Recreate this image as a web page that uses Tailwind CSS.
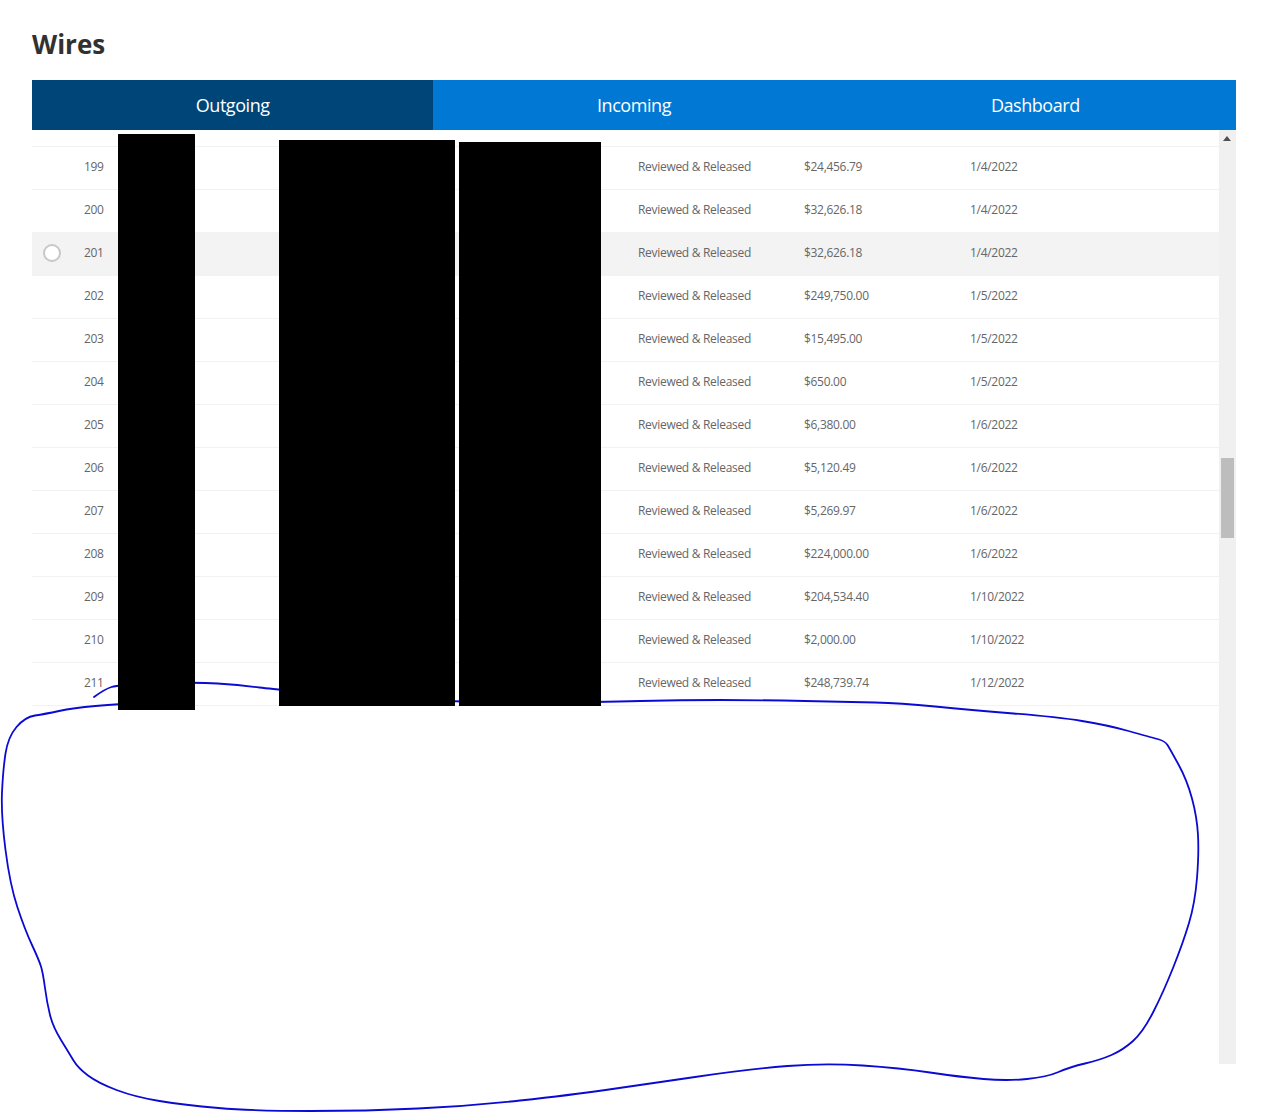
<!DOCTYPE html>
<html lang="en">
<head>
    <meta charset="UTF-8">
    <title>Wires</title>
    <script src="https://cdn.jsdelivr.net/npm/@tailwindcss/browser@4"></script>
</head>
<body class="bg-white font-['Open_Sans',sans-serif] overflow-hidden">
    <div class="relative h-[1112px] px-8 pt-[24px] w-[1268px]">
        <h1 class="h-[56px] text-[26px] leading-[40px] font-bold text-[#323130]">Wires</h1>

        <nav class="grid grid-cols-3 h-[50px] bg-[#0078d4] text-white text-[18px] tracking-[-0.45px]">
            <a href="#" class="flex items-center justify-center bg-[#004578]">Outgoing</a>
            <a href="#" class="flex items-center justify-center">Incoming</a>
            <a href="#" class="flex items-center justify-center">Dashboard</a>
        </nav>

        <div class="flex h-[934px]">
            <div class="flex-1 min-w-0">
                <div class="h-[17px] border-b border-[#f3f2f1]"></div>
                <div id="rows"></div>
            </div>
            <div class="relative w-[17px] bg-[#f0f0f0]">
                <svg class="absolute left-[4px] top-[6px]" width="8" height="5" viewBox="0 0 8 5"><path d="M4 0 L8 5 L0 5 Z" fill="#505050"/></svg>
                <div class="absolute left-[2px] top-[328px] w-[13px] h-[80px] bg-[#bdbdbd]"></div>
            </div>
        </div>

        <!-- pen scribble, sits under the redaction boxes -->
        <svg class="absolute left-0 top-0 pointer-events-none" width="1268" height="1112" viewBox="0 0 1268 1112" fill="none">
            <path id="scribble" stroke="#0a0ad2" stroke-width="1.8" stroke-linejoin="round" stroke-linecap="round"/>
        </svg>

        <!-- redactions -->
        <div class="absolute left-[118px] top-[134px] w-[77px] h-[576px] bg-black"></div>
        <div class="absolute left-[279px] top-[140px] w-[176px] h-[566px] bg-black"></div>
        <div class="absolute left-[459px] top-[142px] w-[142px] h-[564px] bg-black"></div>
    </div>

    <script>
        const wires = [
            [199, '$24,456.79', '1/4/2022'],
            [200, '$32,626.18', '1/4/2022'],
            [201, '$32,626.18', '1/4/2022'],
            [202, '$249,750.00', '1/5/2022'],
            [203, '$15,495.00', '1/5/2022'],
            [204, '$650.00', '1/5/2022'],
            [205, '$6,380.00', '1/6/2022'],
            [206, '$5,120.49', '1/6/2022'],
            [207, '$5,269.97', '1/6/2022'],
            [208, '$224,000.00', '1/6/2022'],
            [209, '$204,534.40', '1/10/2022'],
            [210, '$2,000.00', '1/10/2022'],
            [211, '$248,739.74', '1/12/2022']
        ];

        function renderRow(w) {
            const hovered = w[0] === 201;
            return `<div class="flex items-center h-[43px] pb-[2px] border-b border-[#f3f2f1] text-[12px] tracking-[-0.3px] text-[#666666] ${hovered ? 'bg-[#f3f3f3]' : ''}">
                <div class="w-[52px] pl-[11px]">${hovered ? '<span class="block size-[18px] rounded-full border-2 border-[#c8c8c8] bg-white"></span>' : ''}</div>
                <div class="w-[554px]">${w[0]}</div>
                <div class="w-[166px]">Reviewed &amp; Released</div>
                <div class="w-[166px]">${w[1]}</div>
                <div>${w[2]}</div>
            </div>`;
        }
        document.getElementById('rows').innerHTML = wires.map(renderRow).join('');

        // traced points, smoothed through midpoints
        const pts = [[94,697],[105,689],[118,685],[195,682],[240,685],[279,690],[455,703],[601,702],[680,700],[760,700],[850,702],[900,703],[970,710],[1057,717],[1107,725],[1150,737],[1165,741],[1170,749],[1187,780],[1197,817],[1199,853],[1195,903],[1183,943],[1163,993],[1143,1032],[1123,1050],[1100,1060],[1070,1067],[1047,1077],[1007,1081],[960,1077],[900,1068],[825,1063],[750,1069],[640,1085],[571,1095],[469,1106],[367,1111],[253,1111],[184,1105],[135,1097],[98,1083],[78,1068],[69,1053],[53,1027],[47,1003],[43,973],[39,960],[25,930],[10,885],[1,815],[3,770],[8,737],[25,717],[45,714],[73,708],[118,704],[200,700]];
        let d = `M${pts[0][0]} ${pts[0][1]}`;
        for (let i = 1; i < pts.length - 1; i++) {
            const mx = (pts[i][0] + pts[i + 1][0]) / 2, my = (pts[i][1] + pts[i + 1][1]) / 2;
            d += ` Q${pts[i][0]} ${pts[i][1]} ${mx} ${my}`;
        }
        document.getElementById('scribble').setAttribute('d', d);
    </script>
</body>
</html>
